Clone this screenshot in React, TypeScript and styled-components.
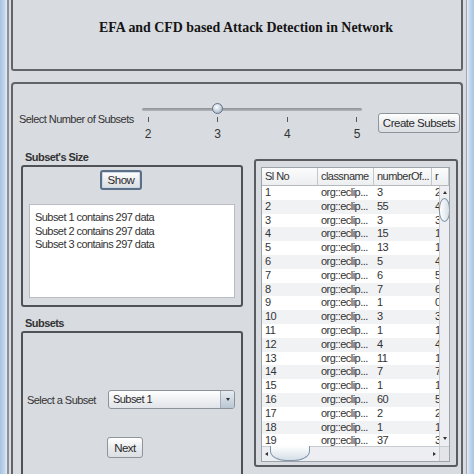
import React from "react";
import styled, { createGlobalStyle } from "styled-components";

const UI_FONT = `"Liberation Sans", Arial, sans-serif`;

const GlobalStyle = createGlobalStyle`
  html, body {
    margin: 0;
    padding: 0;
    background: #d8dbe0;
  }
  body {
    font-family: ${UI_FONT};
    color: #2b2b2b;
    letter-spacing: -0.55px;
  }
`;

const rows: [number, number][] = [
  [3, 2], [55, 4], [3, 3], [15, 1], [13, 1], [5, 4], [6, 5], [7, 6], [1, 0],
  [3, 3], [1, 1], [4, 4], [11, 1], [7, 7], [1, 1], [60, 5], [2, 2], [1, 1],
  [37, 3], [4, 4], [9, 2],
];

const ticks = [2, 3, 4, 5];

const Screen = styled.div`
  width: 474px;
  height: 474px;
  overflow: hidden;
  display: flex;
  background: #d8dbe0;
`;

const FrameEdge = styled.div<{ $side: "left" | "right" }>`
  width: 7px;
  flex-shrink: 0;
  background: ${({ $side }) =>
    $side === "left"
      ? "linear-gradient(to right, #a7c2e0, #c6daee 70%, #e4edf6)"
      : "linear-gradient(to right, #e4edf6, #c3d7ec 40%, #a9c4e2)"};
  ${({ $side }) =>
    $side === "left"
      ? "border-right: 2px solid #8d9096;"
      : "border-left: 1px solid #a3a7ad;"}
`;

const Client = styled.div`
  flex: 1;
  display: flex;
  flex-direction: column;
  padding: 0 3px 0 2px;
  min-width: 0;
`;

const TitlePanel = styled.div`
  height: 71px;
  flex-shrink: 0;
  display: flex;
  justify-content: center;
  padding: 19px 0 0 18px;
  box-sizing: border-box;
  border: 2px solid #626468;
  border-top: none;
  border-radius: 0 0 3px 3px;
`;

const Title = styled.h1`
  margin: 0;
  font-family: "Liberation Serif", "Times New Roman", serif;
  font-weight: bold;
  font-size: 13.9px;
  letter-spacing: 0;
  line-height: 18px;
  color: #141414;
`;

const MainPanel = styled.div`
  flex: 1;
  margin-top: 11px;
  border: 2px solid #626468;
  border-bottom: none;
  border-radius: 4px 4px 0 0;
  display: flex;
  flex-direction: column;
  min-height: 0;
`;

const SliderRow = styled.div`
  display: flex;
  align-items: flex-start;
  padding: 20px 1px 0 6px;
  height: 36px;
`;

const RowLabel = styled.span`
  width: 123px;
  margin-top: 8px;
  font-size: 11px;
  line-height: 14px;
  color: #333;
  white-space: nowrap;
`;

const Slider = styled.div`
  position: relative;
  width: 220px;
  height: 36px;
`;

const Track = styled.div`
  margin-top: 4px;
  height: 3px;
  border-radius: 2px;
  background: linear-gradient(#8e9297, #b3b6ba);
`;

const Thumb = styled.div`
  position: absolute;
  left: 70px;
  top: -1px;
  width: 11px;
  height: 11px;
  box-sizing: border-box;
  border-radius: 50%;
  border: 1px solid #5f7489;
  background: radial-gradient(circle at 40% 35%, #ffffff, #c3cfdb 55%, #8fa3b7);
`;

const TickRow = styled.div`
  display: flex;
  justify-content: space-between;
  margin-top: 6px;
  padding: 0 0 0 1px;
`;

const TickStop = styled.div`
  width: 10px;
  display: flex;
  flex-direction: column;
  align-items: center;
`;

const TickMark = styled.div`
  width: 1px;
  height: 5px;
  background: #55585c;
`;

const TickLabel = styled.span`
  margin-top: 5px;
  font-size: 12px;
  letter-spacing: 0;
  line-height: 14px;
  color: #333;
`;

const Button = styled.button<{ $focused?: boolean }>`
  box-sizing: border-box;
  padding: 0;
  font-family: ${UI_FONT};
  font-size: 11.5px;
  letter-spacing: -0.5px;
  white-space: nowrap;
  color: #2a2a2a;
  border-radius: 3px;
  border: ${({ $focused }) => ($focused ? "2px solid #5b7087" : "1px solid #8e949b")};
  background: linear-gradient(#ffffff, #e6e8eb 60%, #dcdfe3);
  box-shadow: ${({ $focused }) => ($focused ? "inset 0 0 0 1px #c9d8e7" : "none")};
`;

const CreateButton = styled(Button)`
  margin: 9px 0 0 auto;
  width: 82px;
  height: 20px;
`;

const Columns = styled.div`
  flex: 1;
  display: flex;
  gap: 11px;
  padding: 0 3px 0 8px;
  margin-top: 10px;
  min-height: 0;
`;

const LeftColumn = styled.div`
  width: 222px;
  display: flex;
  flex-direction: column;
`;

const SectionLabel = styled.div<{ $gap?: number }>`
  margin-top: ${({ $gap }) => $gap ?? 0}px;
  padding-left: 4px;
  font-size: 11px;
  font-weight: bold;
  line-height: 15px;
  color: #333;
`;

const GroupBox = styled.div<{ $open?: boolean }>`
  box-sizing: border-box;
  border: 2px solid #505256;
  border-radius: 3px;
  padding: 3px 6px 7px;
  display: flex;
  flex-direction: column;
  align-items: flex-start;
  ${({ $open }) =>
    $open
      ? "flex: 1; border-bottom: none; border-radius: 3px 3px 0 0;"
      : "height: 142px;"}
`;

const ShowButton = styled(Button)`
  margin-left: 71px;
  width: 42px;
  height: 20px;
`;

const TextArea = styled.div`
  align-self: stretch;
  margin-top: 14px;
  height: 94px;
  box-sizing: border-box;
  background: #ffffff;
  border: 1px solid #b9bdc3;
  padding: 6px 5px;
`;

const TextLine = styled.div`
  font-size: 11px;
  line-height: 13.5px;
  color: #333;
`;

const SelectRow = styled.div`
  display: flex;
  align-items: center;
  margin: 54px 0 0 -2px;
`;

const SelectLabel = styled.span`
  width: 81px;
  font-size: 11px;
  color: #333;
`;

const Combo = styled.div`
  width: 127px;
  height: 19px;
  box-sizing: border-box;
  display: flex;
  border: 1px solid #8b929a;
  border-radius: 3px;
  background: linear-gradient(#ffffff, #eceef1 60%, #e0e3e7);
  overflow: hidden;
`;

const ComboText = styled.span`
  flex: 1;
  padding-left: 4px;
  font-size: 11px;
  line-height: 17px;
  color: #2a2a2a;
`;

const ComboArrow = styled.div`
  width: 13px;
  display: flex;
  align-items: center;
  justify-content: center;
  border-left: 1px solid #a5adb6;
  background: linear-gradient(#e6ecf2, #b9c6d3);
`;

const Arrow = styled.span<{ $dir: "up" | "down" | "left" | "right"; $size?: number }>`
  width: 0;
  height: 0;
  ${({ $dir, $size = 3 }) => {
    const s = $size;
    if ($dir === "up")
      return `border-left: ${s}px solid transparent; border-right: ${s}px solid transparent; border-bottom: ${s + 1}px solid #333;`;
    if ($dir === "down")
      return `border-left: ${s}px solid transparent; border-right: ${s}px solid transparent; border-top: ${s + 1}px solid #333;`;
    if ($dir === "left")
      return `border-top: ${s}px solid transparent; border-bottom: ${s}px solid transparent; border-right: ${s + 1}px solid #333;`;
    return `border-top: ${s}px solid transparent; border-bottom: ${s}px solid transparent; border-left: ${s + 1}px solid #333;`;
  }}
`;

const NextButton = styled(Button)`
  margin: 28px 0 0 78px;
  width: 36px;
  height: 21px;
`;

const TablePanel = styled.div`
  width: 204px;
  height: 308px;
  margin-top: 9px;
  box-sizing: border-box;
  border: 2px solid #5a5c60;
  border-radius: 3px;
  padding: 6px 6px 3px 5px;
  display: flex;
`;

const ScrollPane = styled.div`
  flex: 1;
  display: grid;
  grid-template-columns: 1fr 10px;
  grid-template-rows: 18px 1fr 15px;
  grid-template-areas:
    "header header"
    "body vbar"
    "hbar corner";
  border: 1px solid #9ea3a9;
  background: #ffffff;
  overflow: hidden;
`;

const Header = styled.div`
  grid-area: header;
  display: grid;
  grid-template-columns: 56px 56px 58px 1fr;
`;

const HeaderCell = styled.div`
  padding-left: 3px;
  font-size: 11px;
  line-height: 17px;
  color: #333;
  white-space: nowrap;
  overflow: hidden;
  background: linear-gradient(#fcfcfc, #eceef0);
  border-right: 1px solid #c3c6ca;
  border-bottom: 1px solid #b5b8bd;
`;

const Body = styled.div`
  grid-area: body;
  overflow: hidden;
  min-width: 0;
`;

const Row = styled.div<{ $even: boolean }>`
  display: grid;
  grid-template-columns: 56px 56px 58px 40px;
  height: 13.8px;
  background: ${({ $even }) => ($even ? "#f1f2f3" : "#ffffff")};
`;

const Cell = styled.div`
  padding-left: 3px;
  font-size: 11px;
  line-height: 13.8px;
  color: #333;
  white-space: nowrap;
  overflow: hidden;
`;

const VBar = styled.div`
  grid-area: vbar;
  display: flex;
  flex-direction: column;
  align-items: center;
  background: #eceef1;
  border-left: 1px solid #c8cbd0;
`;

const VThumb = styled.div`
  margin-top: 4px;
  width: 11px;
  height: 24px;
  box-sizing: border-box;
  border: 1.5px solid #7f95aa;
  border-radius: 6px / 12px;
  background: linear-gradient(to right, #ffffff, #d5dee7);
`;

const BarSpacer = styled.div`
  flex: 1;
`;

const HBar = styled.div`
  grid-area: hbar;
  display: flex;
  align-items: center;
  padding: 0 3px;
  background: #eceef1;
  border-top: 1px solid #c8cbd0;
`;

const HThumb = styled.div`
  margin-left: 2px;
  width: 40px;
  height: 15px;
  margin-top: -2px;
  box-sizing: border-box;
  border: 1.5px solid #7f95aa;
  border-top: none;
  border-radius: 0 0 16px 16px / 0 0 10px 10px;
  background: linear-gradient(#ffffff, #d5dee7);
`;

const Corner = styled.div`
  grid-area: corner;
  background: #e2e4e8;
  border-top: 1px solid #c8cbd0;
  border-left: 1px solid #c8cbd0;
`;

const App: React.FC = () => (
  <>
    <GlobalStyle />
    <Screen>
      <FrameEdge $side="left" />
      <Client>
        <TitlePanel>
          <Title>EFA and CFD based Attack Detection in Network</Title>
        </TitlePanel>
        <MainPanel>
          <SliderRow>
            <RowLabel>Select Number of Subsets</RowLabel>
            <Slider>
              <Track />
              <Thumb />
              <TickRow>
                {ticks.map((t) => (
                  <TickStop key={t}>
                    <TickMark />
                    <TickLabel>{t}</TickLabel>
                  </TickStop>
                ))}
              </TickRow>
            </Slider>
            <CreateButton>Create Subsets</CreateButton>
          </SliderRow>
          <Columns>
            <LeftColumn>
              <SectionLabel>Subset's Size</SectionLabel>
              <GroupBox>
                <ShowButton $focused>Show</ShowButton>
                <TextArea>
                  <TextLine>Subset 1 contains 297 data</TextLine>
                  <TextLine>Subset 2 contains 297 data</TextLine>
                  <TextLine>Subset 3 contains 297 data</TextLine>
                </TextArea>
              </GroupBox>
              <SectionLabel $gap={9}>Subsets</SectionLabel>
              <GroupBox $open>
                <SelectRow>
                  <SelectLabel>Select a Subset</SelectLabel>
                  <Combo>
                    <ComboText>Subset 1</ComboText>
                    <ComboArrow>
                      <Arrow $dir="down" $size={2} />
                    </ComboArrow>
                  </Combo>
                </SelectRow>
                <NextButton>Next</NextButton>
              </GroupBox>
            </LeftColumn>
            <TablePanel>
              <ScrollPane>
                <Header>
                  <HeaderCell>Sl No</HeaderCell>
                  <HeaderCell>classname</HeaderCell>
                  <HeaderCell>numberOf...</HeaderCell>
                  <HeaderCell>r</HeaderCell>
                </Header>
                <Body>
                  {rows.map(([n, r], i) => (
                    <Row key={i} $even={i % 2 === 1}>
                      <Cell>{i + 1}</Cell>
                      <Cell>org::eclip...</Cell>
                      <Cell>{n}</Cell>
                      <Cell>{r}</Cell>
                    </Row>
                  ))}
                </Body>
                <VBar>
                  <Arrow $dir="up" $size={2} style={{ marginTop: 5 }} />
                  <VThumb />
                  <BarSpacer />
                  <Arrow $dir="down" $size={2} style={{ marginBottom: 6 }} />
                </VBar>
                <HBar>
                  <Arrow $dir="left" $size={2} />
                  <HThumb />
                  <BarSpacer />
                  <Arrow $dir="right" $size={2} />
                </HBar>
                <Corner />
              </ScrollPane>
            </TablePanel>
          </Columns>
        </MainPanel>
      </Client>
      <FrameEdge $side="right" />
    </Screen>
  </>
);

export default App;
